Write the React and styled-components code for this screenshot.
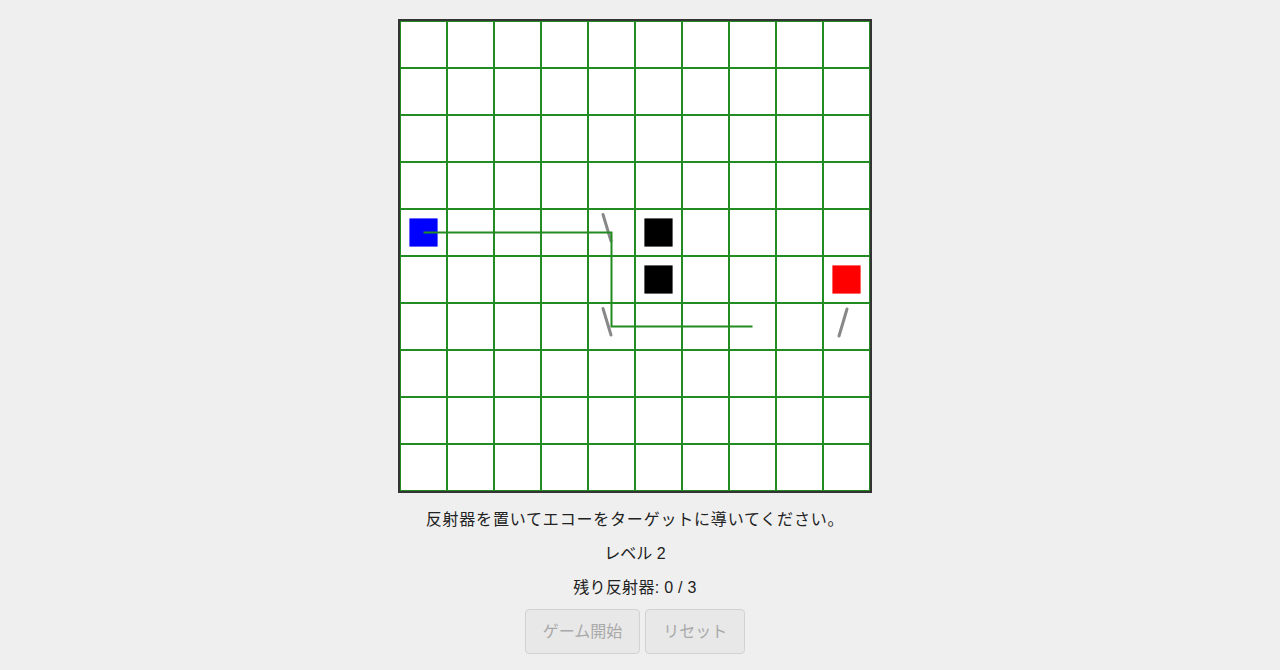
import React from "react";
import styled, { createGlobalStyle } from "styled-components";

// Estilos
const GlobalStyle = createGlobalStyle`
    body {
        margin: 0;
        background: #efefef;
        font-family: "Liberation Sans", "Noto Sans CJK JP", sans-serif;
        color: #222;
    }
`;

const Page = styled.main`
    display: flex;
    flex-direction: column;
    align-items: center;
    padding-top: 19px;
    padding-right: 10px;
`;

const Board = styled.svg`
    display: block;
    width: 470px;
    height: 470px;
    border: 2px solid #333;
    background: #fff;
`;

const Status = styled.div`
    display: flex;
    flex-direction: column;
    align-items: center;
    gap: 14px;
    margin-top: 17px;
`;

const Line = styled.p`
    margin: 0;
    font-size: 16px;
    line-height: 20px;
    letter-spacing: ${(p) => p.$spacing || 0}px;
`;

const Controls = styled.div`
    display: flex;
    gap: 5px;
    margin-top: 11px;
`;

const Button = styled.button`
    font-family: inherit;
    font-size: 16px;
    line-height: 19px;
    padding: 12px 17px;
    border: 1px solid #d2d2d2;
    border-radius: 4px;
    background: #e8e8e8;
    color: #a9a9a9;
    cursor: default;
`;

const CELL = 47;
const SIZE = 10;
const GREEN = "#228b22";

const blocks = [
    { c: 0, r: 4, color: "#0000ff" },
    { c: 5, r: 4, color: "#000" },
    { c: 5, r: 5, color: "#000" },
    { c: 9, r: 5, color: "#ff0000" },
];

const mirrors = [
    { c: 4, r: 4, type: "\\" },
    { c: 4, r: 6, type: "\\" },
    { c: 9, r: 6, type: "/" },
];

const echo = [
    [0, 4],
    [4, 4],
    [4, 6],
    [7, 6],
];

const center = (n) => n * CELL + CELL / 2;

function Grid() {
    const lines = [];
    for (let i = 0; i <= SIZE; i++) {
        lines.push(<line key={"v" + i} x1={i * CELL} y1={0} x2={i * CELL} y2={SIZE * CELL} />);
        lines.push(<line key={"h" + i} x1={0} y1={i * CELL} x2={SIZE * CELL} y2={i * CELL} />);
    }
    return <g stroke={GREEN} strokeWidth="2">{lines}</g>;
}

function Mirror({ c, r, type }) {
    const cx = center(c);
    const cy = center(r);
    const pts = type === "\\"
        ? [cx - 8.5, cy - 18, cx - 0.5, cy + 8.5]
        : [cx + 0.5, cy - 17.5, cx - 7.5, cy + 9.5];
    return (
        <line x1={pts[0]} y1={pts[1]} x2={pts[2]} y2={pts[3]}
            stroke="#888" strokeWidth="3" strokeLinecap="round" />
    );
}

export default function App() {
    const block = CELL * 0.6;
    const pad = (CELL - block) / 2;

    return (
        <>
            <GlobalStyle />
            <Page>
                <Board viewBox="0 0 470 470">
                    <Grid />
                    {blocks.map((b, i) => (
                        <rect key={i} x={b.c * CELL + pad} y={b.r * CELL + pad}
                            width={block} height={block} fill={b.color} />
                    ))}
                    {mirrors.map((m, i) => <Mirror key={i} {...m} />)}
                    <polyline
                        points={echo.map(([c, r]) => `${center(c)},${center(r)}`).join(" ")}
                        fill="none" stroke={GREEN} strokeWidth="2" />
                </Board>

                <Status>
                    <Line $spacing={0.8}>反射器を置いてエコーをターゲットに導いてください。</Line>
                    <Line>レベル 2</Line>
                    <Line $spacing={0.3}>残り反射器: 0 / 3</Line>
                </Status>

                <Controls>
                    <Button disabled>ゲーム開始</Button>
                    <Button disabled>リセット</Button>
                </Controls>
            </Page>
        </>
    );
}
